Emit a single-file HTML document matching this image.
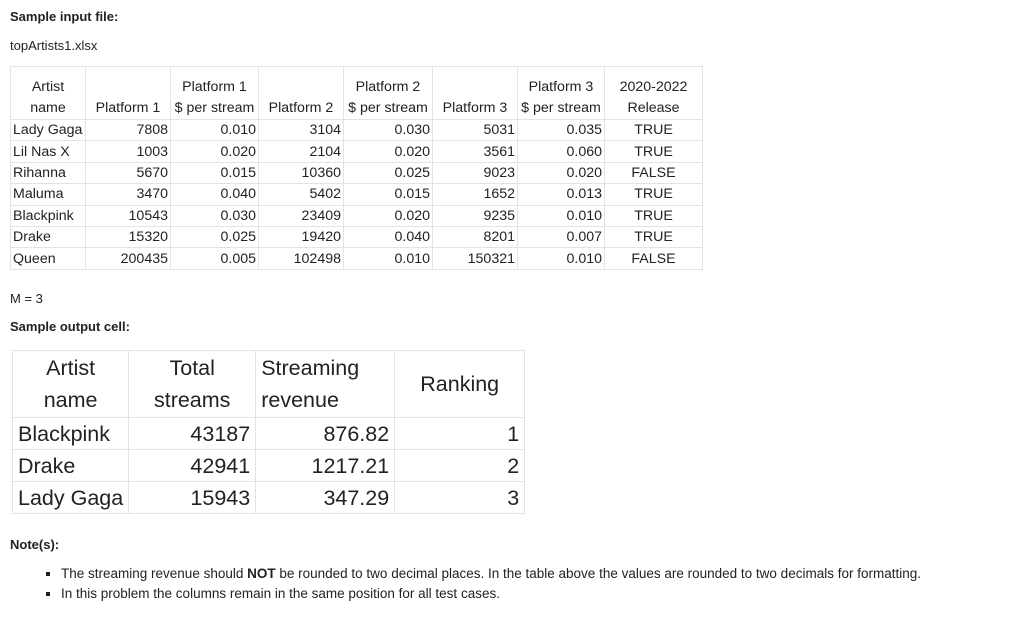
<!DOCTYPE html>
<html><head><meta charset="utf-8"><style>
body{margin:0;width:1024px;height:644px;background:#fff;font-family:"Liberation Sans",Arial,sans-serif;color:#222;position:relative;overflow:hidden}
.a{position:absolute;font-size:13px;white-space:nowrap}
table{position:absolute;border-collapse:collapse;table-layout:fixed;font-family:"Liberation Sans",sans-serif;color:#222}
td{border:1px solid #e3e3e3;padding:0 3px;white-space:nowrap;overflow:hidden}
#t1{left:10px;top:66px;font-size:14.2px}
#t1 td{height:20.4px;line-height:20px;padding:0 2px}
#t1 tr.h td{height:52px;text-align:center;line-height:21px;vertical-align:bottom}
#t2{left:12px;top:350px;font-size:21.5px}
#t2 td{height:31px;line-height:30px;padding:0 5px}
#t2 tr.h td{height:66px;line-height:32px;vertical-align:middle}
.r{text-align:right}.c{text-align:center}
ul{position:absolute;left:44px;top:565px;margin:0;padding:0 0 0 17px;font-size:13.5px;list-style:square}
li{height:20px;line-height:17px}
</style></head><body>
<div class="a" style="left:10px;top:9px;font-weight:bold">Sample input file:</div>
<div class="a" style="left:10px;top:38px">topArtists1.xlsx</div>
<table id="t1">
<colgroup><col style="width:75px"><col style="width:85px"><col style="width:88px"><col style="width:85px"><col style="width:89px"><col style="width:85px"><col style="width:87px"><col style="width:98px"></colgroup>
<tr class="h"><td>Artist<br>name</td><td>Platform 1</td><td>Platform 1<br>$ per stream</td><td>Platform 2</td><td>Platform 2<br>$ per stream</td><td>Platform 3</td><td>Platform 3<br>$ per stream</td><td>2020-2022<br>Release</td></tr>
<tr><td>Lady Gaga</td><td class="r">7808</td><td class="r">0.010</td><td class="r">3104</td><td class="r">0.030</td><td class="r">5031</td><td class="r">0.035</td><td class="c">TRUE</td></tr>
<tr><td>Lil Nas X</td><td class="r">1003</td><td class="r">0.020</td><td class="r">2104</td><td class="r">0.020</td><td class="r">3561</td><td class="r">0.060</td><td class="c">TRUE</td></tr>
<tr><td>Rihanna</td><td class="r">5670</td><td class="r">0.015</td><td class="r">10360</td><td class="r">0.025</td><td class="r">9023</td><td class="r">0.020</td><td class="c">FALSE</td></tr>
<tr><td>Maluma</td><td class="r">3470</td><td class="r">0.040</td><td class="r">5402</td><td class="r">0.015</td><td class="r">1652</td><td class="r">0.013</td><td class="c">TRUE</td></tr>
<tr><td>Blackpink</td><td class="r">10543</td><td class="r">0.030</td><td class="r">23409</td><td class="r">0.020</td><td class="r">9235</td><td class="r">0.010</td><td class="c">TRUE</td></tr>
<tr><td>Drake</td><td class="r">15320</td><td class="r">0.025</td><td class="r">19420</td><td class="r">0.040</td><td class="r">8201</td><td class="r">0.007</td><td class="c">TRUE</td></tr>
<tr><td>Queen</td><td class="r">200435</td><td class="r">0.005</td><td class="r">102498</td><td class="r">0.010</td><td class="r">150321</td><td class="r">0.010</td><td class="c">FALSE</td></tr>
</table>
<div class="a" style="left:10px;top:291px">M = 3</div>
<div class="a" style="left:10px;top:319px;font-weight:bold">Sample output cell:</div>
<table id="t2">
<colgroup><col style="width:114px"><col style="width:127px"><col style="width:139px"><col style="width:130px"></colgroup>
<tr class="h"><td class="c">Artist<br>name</td><td class="c">Total<br>streams</td><td>Streaming<br>revenue</td><td class="c">Ranking</td></tr>
<tr><td>Blackpink</td><td class="r">43187</td><td class="r">876.82</td><td class="r">1</td></tr>
<tr><td>Drake</td><td class="r">42941</td><td class="r">1217.21</td><td class="r">2</td></tr>
<tr><td>Lady Gaga</td><td class="r">15943</td><td class="r">347.29</td><td class="r">3</td></tr>
</table>
<div class="a" style="left:10px;top:537px;font-weight:bold">Note(s):</div>
<ul>
<li>The streaming revenue should <b>NOT</b> be rounded to two decimal places. In the table above the values are rounded to two decimals for formatting.</li>
<li>In this problem the columns remain in the same position for all test cases.</li>
</ul>
</body></html>
